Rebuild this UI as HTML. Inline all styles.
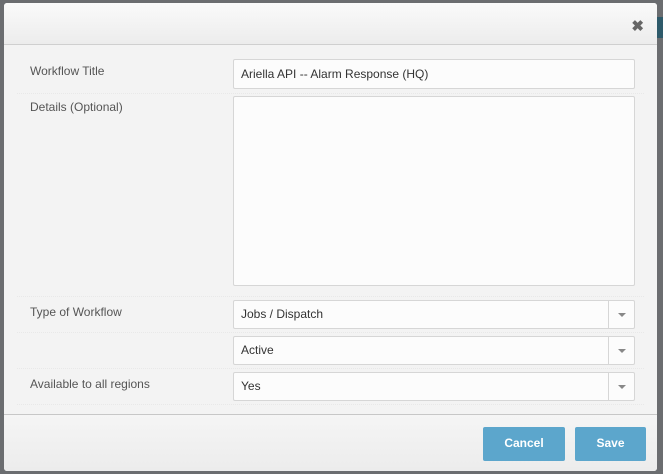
<!DOCTYPE html>
<html><head><style>
*{box-sizing:border-box;margin:0;padding:0}
body{width:663px;height:474px;background:#6b6d70;position:relative;overflow:hidden;font-family:"Liberation Sans",sans-serif;font-size:12px;color:#333}
.teal{position:absolute;left:655px;top:17px;width:8px;height:21px;background:#2e5a6a}
.dlg{position:absolute;left:4px;top:3px;width:653px;height:468px;background:#f3f3f3;border-radius:3px;overflow:hidden}
.hdr{height:42px;background:linear-gradient(#fafafa,#ececec);border-bottom:1px solid #cfcfcf}
.x{position:absolute;right:13px;top:14px;font-size:15px;font-weight:bold;color:#666}
.lbl{position:absolute;left:26px;color:#555;font-size:12px}
.inp{position:absolute;left:229px;width:402px;background:#fcfcfc;border:1px solid #d6d6d6;border-radius:2px;padding-left:7px;font-size:12px;color:#333}
.sep{position:absolute;left:13px;width:627px;border-top:1px dotted #e8e8e8}
.sel .arr{position:absolute;right:0;top:0;bottom:0;width:26px;border-left:1px solid #d6d6d6}
.sel .arr:after{content:"";position:absolute;left:9px;top:12px;border:4px solid transparent;border-top:4px solid #888;border-bottom:0}
.ftr{position:absolute;left:0;top:411px;width:653px;height:57px;border-top:1px solid #c7c7c7;background:linear-gradient(#f5f5f5,#ececec)}
.btn{position:absolute;top:12px;height:34px;background:#5ca6cc;color:#fff;font-size:12px;font-weight:bold;text-align:center;line-height:33px;border-radius:2px}
</style></head><body>
<div class="teal"></div>
<div class="dlg">
<div class="hdr"></div><div class="x">✖</div>
<div class="lbl" style="top:61px">Workflow Title</div>
<div class="inp" style="top:56px;height:30px;line-height:28px">Ariella API -- Alarm Response (HQ)</div>
<div class="sep" style="top:90px"></div>
<div class="lbl" style="top:97px">Details (Optional)</div>
<div class="inp" style="top:93px;height:190px"></div>
<div class="sep" style="top:293px"></div>
<div class="lbl" style="top:302px">Type of Workflow</div>
<div class="inp sel" style="top:297px;height:29px;line-height:27px">Jobs / Dispatch<span class="arr"></span></div>
<div class="sep" style="top:329px"></div>
<div class="inp sel" style="top:333px;height:29px;line-height:27px">Active<span class="arr"></span></div>
<div class="sep" style="top:365px"></div>
<div class="lbl" style="top:374px">Available to all regions</div>
<div class="inp sel" style="top:369px;height:29px;line-height:27px">Yes<span class="arr"></span></div>
<div class="sep" style="top:401px"></div>
<div class="ftr">
<div class="btn" style="left:479px;width:82px">Cancel</div>
<div class="btn" style="left:571px;width:71px">Save</div>
</div>
</div>
</body></html>
